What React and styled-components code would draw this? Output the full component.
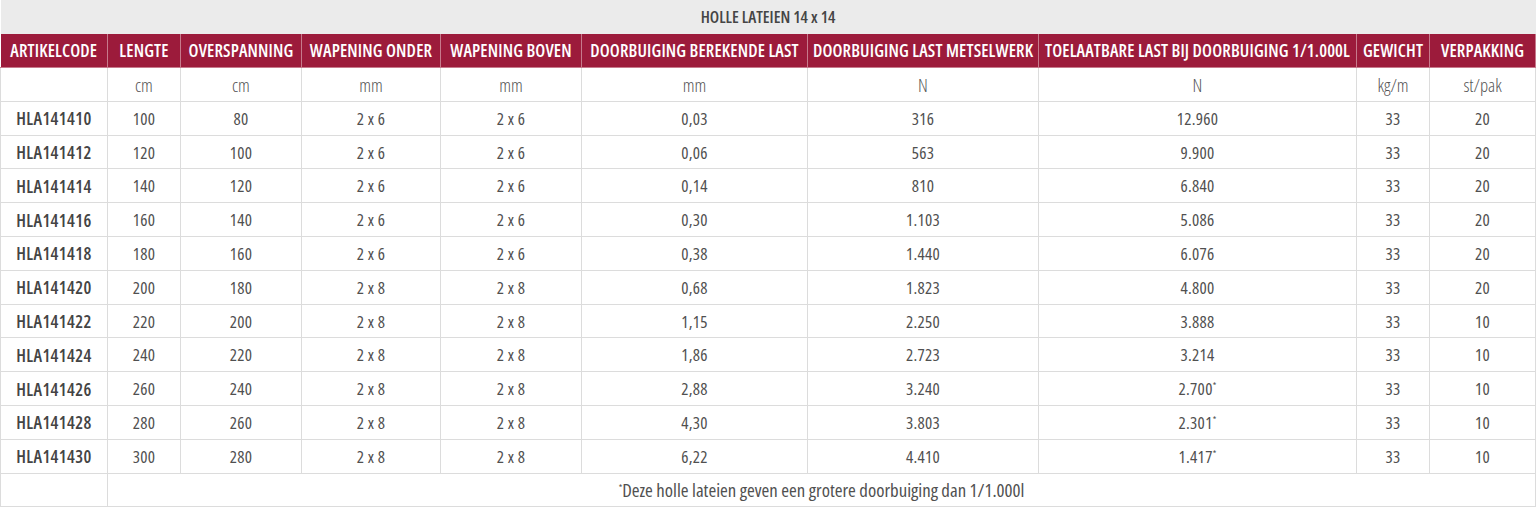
import styled, { createGlobalStyle } from "styled-components";

const GlobalStyle = createGlobalStyle`
  html, body {
    margin: 0;
    padding: 0;
    background: #fff;
  }
  body {
    font-family: "Open Sans", "Liberation Sans Narrow", sans-serif;
    font-stretch: 75%;
  }
`;

// data -----------------------------------------------
const columns = [
  { label: "ARTIKELCODE", unit: "", width: 107 },
  { label: "LENGTE", unit: "cm", width: 73 },
  { label: "OVERSPANNING", unit: "cm", width: 121 },
  { label: "WAPENING ONDER", unit: "mm", width: 139 },
  { label: "WAPENING BOVEN", unit: "mm", width: 141 },
  { label: "DOORBUIGING BEREKENDE LAST", unit: "mm", width: 226 },
  { label: "DOORBUIGING LAST METSELWERK", unit: "N", width: 231 },
  { label: "TOELAATBARE LAST BIJ DOORBUIGING 1/1.000L", unit: "N", width: 318 },
  { label: "GEWICHT", unit: "kg/m", width: 73 },
  { label: "VERPAKKING", unit: "st/pak", width: 106 },
];

const rows = [
  ["HLA141410", "100", "80", "2 x 6", "2 x 6", "0,03", "316", "12.960", "33", "20"],
  ["HLA141412", "120", "100", "2 x 6", "2 x 6", "0,06", "563", "9.900", "33", "20"],
  ["HLA141414", "140", "120", "2 x 6", "2 x 6", "0,14", "810", "6.840", "33", "20"],
  ["HLA141416", "160", "140", "2 x 6", "2 x 6", "0,30", "1.103", "5.086", "33", "20"],
  ["HLA141418", "180", "160", "2 x 6", "2 x 6", "0,38", "1.440", "6.076", "33", "20"],
  ["HLA141420", "200", "180", "2 x 8", "2 x 8", "0,68", "1.823", "4.800", "33", "20"],
  ["HLA141422", "220", "200", "2 x 8", "2 x 8", "1,15", "2.250", "3.888", "33", "10"],
  ["HLA141424", "240", "220", "2 x 8", "2 x 8", "1,86", "2.723", "3.214", "33", "10"],
  ["HLA141426", "260", "240", "2 x 8", "2 x 8", "2,88", "3.240", "2.700*", "33", "10"],
  ["HLA141428", "280", "260", "2 x 8", "2 x 8", "4,30", "3.803", "2.301*", "33", "10"],
  ["HLA141430", "300", "280", "2 x 8", "2 x 8", "6,22", "4.410", "1.417*", "33", "10"],
];

// render -----------------------------------------------
function Value({ text }) {
  if (text.endsWith("*")) {
    return (
      <>
        {text.slice(0, -1)}
        <Star>*</Star>
      </>
    );
  }
  return text;
}

const App = () => {
  return (
    <>
      <GlobalStyle />
      <Table>
        <colgroup>
          {columns.map((col) => (
            <col key={col.label} style={{ width: col.width }} />
          ))}
        </colgroup>
        <thead>
          <tr>
            <Title colSpan={columns.length}>HOLLE LATEIEN 14 x 14</Title>
          </tr>
          <tr>
            {columns.map((col) => (
              <HeadCell key={col.label}>{col.label}</HeadCell>
            ))}
          </tr>
        </thead>
        <tbody>
          <tr>
            {columns.map((col) => (
              <UnitCell key={col.label}>{col.unit}</UnitCell>
            ))}
          </tr>
          {rows.map((row) => (
            <tr key={row[0]}>
              {row.map((value, i) => (
                <Cell key={i} $code={i === 0}>
                  <Value text={value} />
                </Cell>
              ))}
            </tr>
          ))}
          <tr>
            <Cell />
            <Note colSpan={columns.length - 1}>
              <Star>*</Star>Deze holle lateien geven een grotere doorbuiging dan 1/1.000l
            </Note>
          </tr>
        </tbody>
      </Table>
    </>
  );
};

export default App;

// condensed face only: the installed Open Sans snaps to 75% or 100% width
const Table = styled.table`
  width: 1535px;
  table-layout: fixed;
  border-collapse: collapse;
  font-stretch: 75%;
  tr {
    height: 33.8px;
  }
`;

const Title = styled.th`
  background: #ebebeb;
  color: #454545;
  font-size: 16.5px;
  font-weight: 600;
  text-align: center;
  padding: 0;
`;

const HeadCell = styled.th`
  background: #9c1b3b;
  color: #fff;
  font-size: 17.5px;
  letter-spacing: 0.15px;
  font-weight: 600;
  text-align: center;
  white-space: nowrap;
  padding: 0;
  border: 1px solid #c77a8c;
  border-top: none;
  &:first-child {
    border-left: none;
  }
`;

const Cell = styled.td`
  border: 1px solid #dcdcdc;
  text-align: center;
  padding: 0;
  font-size: ${(p) => (p.$code ? "17.5px" : "17px")};
  letter-spacing: ${(p) => (p.$code ? "0.4px" : "0.3px")};
  font-weight: ${(p) => (p.$code ? 600 : 400)};
  color: ${(p) => (p.$code ? "#444" : "#505050")};
  white-space: nowrap;
`;

const UnitCell = styled(Cell)`
  font-size: 18.5px;
  letter-spacing: 0;
  font-weight: 300;
  color: #555;
`;

const Note = styled(Cell)`
  font-size: 18.8px;
  letter-spacing: 0;
`;

const Star = styled.sup`
  font-size: 9px;
  vertical-align: 6px;
`;
